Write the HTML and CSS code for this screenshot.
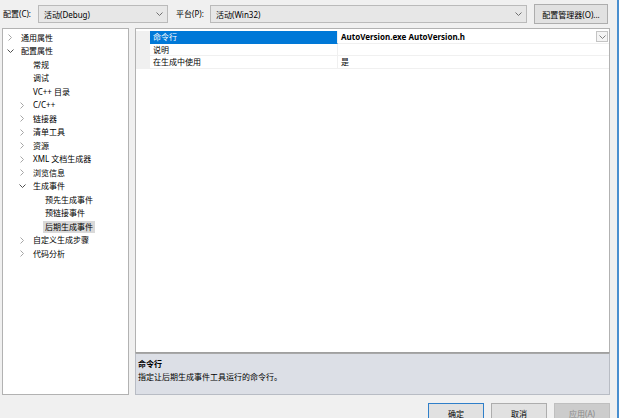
FILE: index.html
```html
<!DOCTYPE html>
<html lang="zh-CN">
<head>
    <meta charset="UTF-8">
    <meta name="viewport" content="width=device-width, initial-scale=1.0">
    <title>属性页</title>
    <link rel="stylesheet" href="styles.css">
</head>
<body>
<div class="screen">
    <div class="dialog">

        <div class="toolbar">
            <label class="field-label label-config">配置(C):</label>
            <div class="combo combo-config">
                <span>活动(Debug)</span>
                <svg class="chev" width="7" height="4" viewBox="0 0 7 4"><path d="M0.5 0.5 L3.5 3.5 L6.5 0.5" fill="none" stroke="#707070" stroke-width="1"/></svg>
            </div>
            <label class="field-label label-platform">平台(P):</label>
            <div class="combo combo-platform">
                <span>活动(Win32)</span>
                <svg class="chev" width="7" height="4" viewBox="0 0 7 4"><path d="M0.5 0.5 L3.5 3.5 L6.5 0.5" fill="none" stroke="#707070" stroke-width="1"/></svg>
            </div>
            <button class="btn btn-manager">配置管理器(O)...</button>
        </div>

        <div class="content">
            <ul class="tree">
                <li class="lvl1"><span class="twisty closed"></span><span class="label">通用属性</span></li>
                <li class="lvl1"><span class="twisty open"></span><span class="label">配置属性</span></li>
                <li class="lvl2"><span class="twisty"></span><span class="label">常规</span></li>
                <li class="lvl2"><span class="twisty"></span><span class="label">调试</span></li>
                <li class="lvl2"><span class="twisty"></span><span class="label">VC++ 目录</span></li>
                <li class="lvl2"><span class="twisty closed"></span><span class="label">C/C++</span></li>
                <li class="lvl2"><span class="twisty closed"></span><span class="label">链接器</span></li>
                <li class="lvl2"><span class="twisty closed"></span><span class="label">清单工具</span></li>
                <li class="lvl2"><span class="twisty closed"></span><span class="label">资源</span></li>
                <li class="lvl2"><span class="twisty closed"></span><span class="label">XML 文档生成器</span></li>
                <li class="lvl2"><span class="twisty closed"></span><span class="label">浏览信息</span></li>
                <li class="lvl2"><span class="twisty open"></span><span class="label">生成事件</span></li>
                <li class="lvl3"><span class="twisty"></span><span class="label">预先生成事件</span></li>
                <li class="lvl3"><span class="twisty"></span><span class="label">预链接事件</span></li>
                <li class="lvl3 selected"><span class="twisty"></span><span class="label">后期生成事件</span></li>
                <li class="lvl2"><span class="twisty closed"></span><span class="label">自定义生成步骤</span></li>
                <li class="lvl2"><span class="twisty closed"></span><span class="label">代码分析</span></li>
            </ul>

            <div class="props">
                <div class="grid">
                    <div class="grid-row active">
                        <div class="gutter"></div>
                        <div class="prop-name">命令行</div>
                        <div class="prop-value strong">
                            <span>AutoVersion.exe AutoVersion.h</span>
                            <span class="drop">
                                <svg width="7" height="4" viewBox="0 0 7 4"><path d="M0.5 0.5 L3.5 3.5 L6.5 0.5" fill="none" stroke="#808080" stroke-width="1"/></svg>
                            </span>
                        </div>
                    </div>
                    <div class="grid-row">
                        <div class="gutter"></div>
                        <div class="prop-name">说明</div>
                        <div class="prop-value"></div>
                    </div>
                    <div class="grid-row">
                        <div class="gutter"></div>
                        <div class="prop-name">在生成中使用</div>
                        <div class="prop-value">是</div>
                    </div>
                </div>
                <div class="desc">
                    <div class="desc-title">命令行</div>
                    <div class="desc-text">指定让后期生成事件工具运行的命令行。</div>
                </div>
            </div>
        </div>

        <div class="footer">
            <button class="btn btn-default">确定</button>
            <button class="btn">取消</button>
            <button class="btn" disabled>应用(A)</button>
        </div>

    </div>
    <div class="outside"></div>
</div>
</body>
</html>
```

FILE: styles.css
```css
body {
    margin: 0;
    padding: 0;
    font-family: "Noto Sans", "Noto Sans CJK SC", sans-serif;
    font-size: 8px;
    color: #000;
    background-color: #fff;
    overflow: hidden;
}

.screen {
    display: flex;
    width: 633px;
    height: 418px;
}

.dialog {
    width: 617px;
    height: 418px;
    background-color: #f0f0f0;
    border-right: 2px solid #4a8fcf;
    overflow: hidden;
}

.outside {
    flex: 1;
    background-color: #fff;
}

/* top row */
.toolbar {
    display: flex;
    align-items: center;
    height: 28px;
    padding-left: 3px;
}

.field-label {
    line-height: 18px;
}

.label-config {
    width: 35px;
}

.label-platform {
    width: 34px;
    margin-left: 8px;
}

.combo {
    box-sizing: border-box;
    height: 18px;
    display: flex;
    align-items: center;
    justify-content: space-between;
    padding: 0 4px 0 5px;
    background-color: #e7e7e7;
    border: 1px solid #bababa;
}

.combo-config {
    width: 130px;
}

.combo-platform {
    width: 317px;
}

.btn {
    box-sizing: border-box;
    font-family: inherit;
    font-size: 8px;
    color: #000;
    background-color: #e1e1e1;
    border: 1px solid #adadad;
    padding: 0;
    height: 21px;
    width: 56px;
}

.btn-manager {
    width: 74px;
    height: 20px;
    margin-left: 7px;
}

.btn-default {
    border-color: #2f7fc9;
}

.btn:disabled {
    background-color: #cccccc;
    border-color: #bfbfbf;
    color: #8a8a8a;
}

/* main area */
.content {
    display: flex;
    gap: 6px;
    padding-left: 2px;
    height: 367px;
}

.tree {
    box-sizing: border-box;
    width: 127px;
    height: 367px;
    margin: 0;
    padding: 2px 0 0 0;
    list-style: none;
    background-color: #fff;
    border: 1px solid #b2b2b2;
}

.tree li {
    display: flex;
    align-items: center;
    height: 13.5px;
    white-space: nowrap;
}

.tree .lvl2 {
    padding-left: 12px;
}

.tree .lvl3 {
    padding-left: 24px;
}

.twisty {
    width: 18px;
    height: 13px;
    flex-shrink: 0;
    background-repeat: no-repeat;
    background-position: 6px center;
}

.twisty.closed {
    background-image: url("data:image/svg+xml,%3Csvg xmlns='http://www.w3.org/2000/svg' width='4' height='7' viewBox='0 0 4 7'%3E%3Cpath d='M0.5 0.5 L3.5 3.5 L0.5 6.5' fill='none' stroke='%23a6a6a6' stroke-width='1'/%3E%3C/svg%3E");
    background-position: 5px center;
}

.twisty.open {
    background-image: url("data:image/svg+xml,%3Csvg xmlns='http://www.w3.org/2000/svg' width='7' height='4' viewBox='0 0 7 4'%3E%3Cpath d='M0.5 0.5 L3.5 3.5 L6.5 0.5' fill='none' stroke='%23505050' stroke-width='1'/%3E%3C/svg%3E");
    background-position: 4px center;
}

.tree .label {
    padding: 0 2px;
    margin-left: -2px;
    line-height: 12px;
}

.tree .selected .label {
    background-color: #d9d9d9;
}

.props {
    width: 475px;
    display: flex;
    flex-direction: column;
}

.grid {
    box-sizing: border-box;
    height: 325px;
    padding-top: 2px;
    background-color: #fff;
    border: 1px solid #b2b2b2;
    border-bottom-color: #a0a0a0;
}

.grid-row {
    display: flex;
    height: 12.5px;
    line-height: 12.5px;
}

.gutter {
    width: 14px;
    background-color: #f0f0f0;
}

.prop-name {
    box-sizing: border-box;
    width: 188px;
    padding-left: 3px;
    border-bottom: 1px solid #f0f0f0;
    border-right: 1px solid #f0f0f0;
}

.grid-row.active .prop-name {
    background-color: #0078d7;
    color: #fff;
    border-bottom-color: #0078d7;
}

.prop-value {
    flex: 1;
    display: flex;
    justify-content: space-between;
    align-items: center;
    padding-left: 3px;
    padding-right: 1px;
    border-bottom: 1px solid #f0f0f0;
}

.prop-value.strong {
    font-weight: bold;
}

.drop {
    box-sizing: border-box;
    width: 12px;
    height: 11px;
    display: flex;
    align-items: center;
    justify-content: center;
    background-color: #f4f4f4;
    border: 1px solid #c4c4c4;
}

.desc {
    box-sizing: border-box;
    height: 42px;
    padding: 3px 2px;
    background-color: #dcdfe6;
    border: 1px solid #b8bcc4;
    border-top-color: #a8a8a8;
    line-height: 13px;
}

.desc-title {
    font-weight: bold;
}

.footer {
    display: flex;
    justify-content: flex-end;
    gap: 7px;
    padding: 8px 7px 0 0;
}
```
